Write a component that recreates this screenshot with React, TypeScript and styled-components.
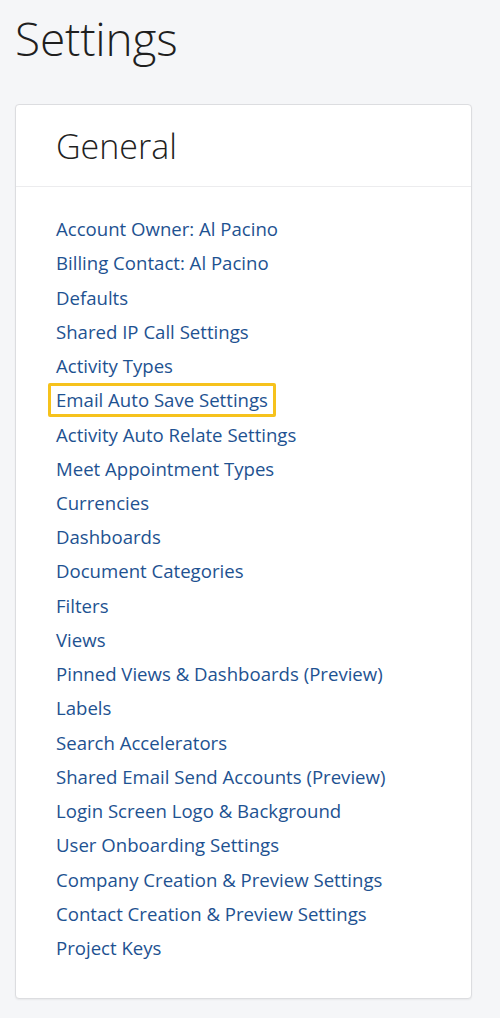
import React from 'react'
import styled, { createGlobalStyle } from 'styled-components'

const GlobalStyle = createGlobalStyle`
  html, body {
    margin: 0;
    padding: 0;
    background: #f5f6f8;
    font-family: "Open Sans", "Noto Sans", sans-serif;
  }
`

const Page = styled.div`
  padding: 8px 28px 20px 15px;
`

const Title = styled.h1`
  margin: 0;
  font-size: 46px;
  font-weight: 300;
  line-height: 60px;
  color: #1f1f1f;
  letter-spacing: -0.2px;
`

const Card = styled.section`
  margin-top: 36px;
  background: #fff;
  border: 1px solid #dcdde0;
  border-radius: 4px;
  box-shadow: 0 1px 2px rgba(0, 0, 0, 0.06);
`

const CardHeader = styled.div`
  height: 81px;
  display: flex;
  align-items: center;
  padding-left: 40px;
  border-bottom: 1px solid #ececee;
`

const CardTitle = styled.h2`
  margin: 0;
  font-size: 34px;
  font-weight: 300;
  color: #1f1f1f;
`

const LinkList = styled.ul`
  list-style: none;
  margin: 0;
  padding: 25px 0 33px 40px;
`

const Item = styled.li`
  height: 34.24px;
  display: flex;
  align-items: center;
`

const SettingLink = styled.a<{ $active?: boolean }>`
  font-size: 18.6px;
  color: #1e5291;
  text-decoration: none;
  line-height: 28px;
  border: 3px solid ${p => (p.$active ? '#f6c21c' : 'transparent')};
  border-radius: 2px;
  padding: 0 5px;
  margin-left: -8px;
  cursor: pointer;
`

const links = [
  'Account Owner: Al Pacino',
  'Billing Contact: Al Pacino',
  'Defaults',
  'Shared IP Call Settings',
  'Activity Types',
  'Email Auto Save Settings',
  'Activity Auto Relate Settings',
  'Meet Appointment Types',
  'Currencies',
  'Dashboards',
  'Document Categories',
  'Filters',
  'Views',
  'Pinned Views & Dashboards (Preview)',
  'Labels',
  'Search Accelerators',
  'Shared Email Send Accounts (Preview)',
  'Login Screen Logo & Background',
  'User Onboarding Settings',
  'Company Creation & Preview Settings',
  'Contact Creation & Preview Settings',
  'Project Keys',
]

export default function App() {
  return (
    <>
      <GlobalStyle />
      <Page>
        <Title>Settings</Title>
        <Card>
          <CardHeader>
            <CardTitle>General</CardTitle>
          </CardHeader>
          <LinkList>
            {links.map(label => (
              <Item key={label}>
                <SettingLink $active={label === 'Email Auto Save Settings'}>{label}</SettingLink>
              </Item>
            ))}
          </LinkList>
        </Card>
      </Page>
    </>
  )
}
